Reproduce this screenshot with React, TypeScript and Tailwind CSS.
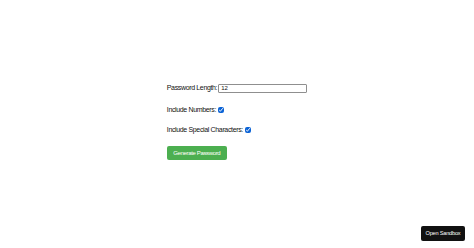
const App = () => {
  return (
    <div
      className="relative flex h-[248px] w-full items-center justify-center bg-white text-[7px] tracking-[-0.35px] text-[#111]"
      style={{ fontFamily: '"Liberation Sans", Arial, sans-serif' }}
    >
      <div className="flex flex-col items-start pb-[4px]">
        <div className="flex h-[9px] items-center">
          <label htmlFor="length">Password Length:</label>
          <input
            id="length"
            type="number"
            defaultValue={12}
            className="ml-px h-[9px] w-[89px] rounded-[1px] border border-[#8f8f8f] px-[2px] text-[6px] tracking-normal outline-none"
          />
        </div>
        <div className="mt-[13px] flex h-[8px] items-center">
          <label htmlFor="numbers">Include Numbers:</label>
          <input
            id="numbers"
            type="checkbox"
            defaultChecked
            className="ml-[2px] h-[6px] w-[6px] accent-[#0b63d6]"
          />
        </div>
        <div className="mt-[12px] flex h-[8px] items-center">
          <label htmlFor="special">Include Special Characters:</label>
          <input
            id="special"
            type="checkbox"
            defaultChecked
            className="ml-[2px] h-[6px] w-[6px] accent-[#0b63d6]"
          />
        </div>
        <button className="mt-[12px] h-[14px] w-[60px] rounded-[2px] bg-[#4caf50] text-[6px] text-white">
          Generate Password
        </button>
      </div>
      <button className="absolute bottom-[7px] right-[9px] h-[15px] w-[44px] rounded-[2px] bg-[#111] text-[5.6px] tracking-[-0.2px] text-white">
        Open Sandbox
      </button>
    </div>
  );
};

export default App;
